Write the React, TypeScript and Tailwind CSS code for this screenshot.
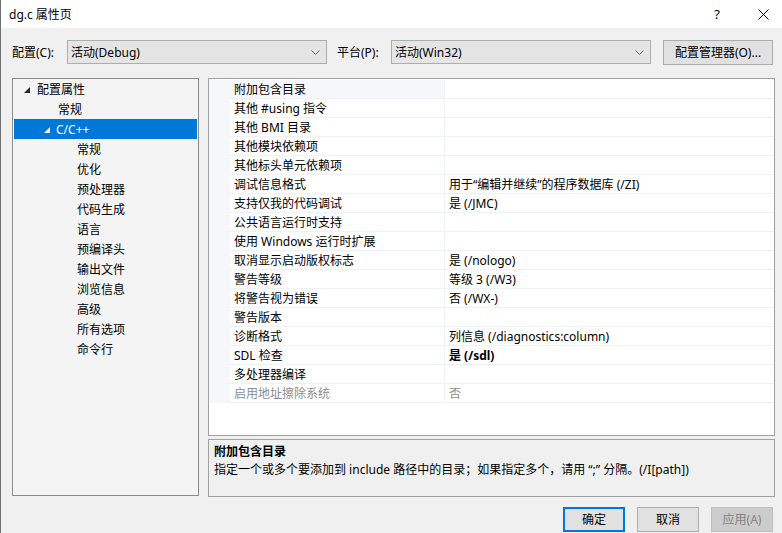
const font = { fontFamily: '"Noto Sans", "Noto Sans CJK SC", sans-serif' };

type Row = { name: string; value?: string; bold?: boolean; disabled?: boolean; selected?: boolean };

const rows: Row[] = [
  { name: "附加包含目录", selected: true },
  { name: "其他 #using 指令" },
  { name: "其他 BMI 目录" },
  { name: "其他模块依赖项" },
  { name: "其他标头单元依赖项" },
  { name: "调试信息格式", value: "用于“编辑并继续”的程序数据库 (/ZI)" },
  { name: "支持仅我的代码调试", value: "是 (/JMC)" },
  { name: "公共语言运行时支持" },
  { name: "使用 Windows 运行时扩展" },
  { name: "取消显示启动版权标志", value: "是 (/nologo)" },
  { name: "警告等级", value: "等级 3 (/W3)" },
  { name: "将警告视为错误", value: "否 (/WX-)" },
  { name: "警告版本" },
  { name: "诊断格式", value: "列信息 (/diagnostics:column)" },
  { name: "SDL 检查", value: "是 (/sdl)", bold: true },
  { name: "多处理器编译" },
  { name: "启用地址擦除系统", value: "否", disabled: true },
];

const children = ["常规", "优化", "预处理器", "代码生成", "语言", "预编译头", "输出文件", "浏览信息", "高级", "所有选项", "命令行"];

function Expanded({ color }: { color: string }) {
  return (
    <svg width="6" height="6" viewBox="0 0 6 6" className="shrink-0">
      <polygon points="6,0 6,6 0,6" fill={color} />
    </svg>
  );
}

function Chevron() {
  return (
    <svg width="9" height="5" viewBox="0 0 9 5">
      <polyline points="0.5,0.5 4.5,4.5 8.5,0.5" fill="none" stroke="#606060" strokeWidth="1" />
    </svg>
  );
}

function Combo({ text, width }: { text: string; width: string }) {
  return (
    <div className={`${width} flex h-[24px] items-center justify-between border border-[#adadad] bg-[#e5e5e5] pl-[3px] pr-[6px]`}>
      <span className="pt-[2px]">{text}</span>
      <Chevron />
    </div>
  );
}

export default function App() {
  return (
    <div
      style={font}
      className="flex h-[533px] w-[782px] flex-col overflow-hidden border-l border-[#707070] bg-[#f0f0f0] text-[12px] leading-[16px] text-black"
    >
      {/* Title bar */}
      <div className="flex h-[28px] shrink-0 items-center bg-white pl-[8px]">
        <span className="pt-[2px] text-[12px]">dg.c 属性页</span>
        <span className="ml-auto w-[12px] text-center text-[13px]">?</span>
        <svg width="11" height="11" viewBox="0 0 11 11" className="ml-[35px] mr-[13px]">
          <path d="M0.5 0.5 L10.5 10.5 M10.5 0.5 L0.5 10.5" stroke="#000" strokeWidth="1" />
        </svg>
      </div>

      {/* Configuration row */}
      <div className="mt-[12px] flex h-[24px] items-center pl-[11px]">
        <span className="w-[55px] pt-[2px]">配置(C):</span>
        <Combo text="活动(Debug)" width="w-[260px]" />
        <span className="ml-[10px] w-[54px] pt-[2px]">平台(P):</span>
        <Combo text="活动(Win32)" width="w-[260px]" />
        <button className="ml-[12px] h-[25px] w-[110px] border border-[#adadad] bg-[#e1e1e1] pt-px">配置管理器(O)...</button>
      </div>

      {/* Main area */}
      <div className="mt-[14px] flex pl-[11px]">
        {/* Tree */}
        <div className="h-[418px] w-[187px] border border-[#8c8c8c] bg-[#f4f4f4] px-px">
          <div className="flex h-[20px] items-center pt-[2px]">
            <span className="ml-[10px]"><Expanded color="#262626" /></span>
            <span className="ml-[7px]">配置属性</span>
          </div>
          <div className="flex h-[20px] items-center pl-[44px] pt-[2px]">常规</div>
          <div className="flex h-[20px] items-center bg-[#0078d7] pt-[2px] text-white">
            <span className="ml-[30px]"><Expanded color="#ffffff" /></span>
            <span className="ml-[6px]">C/C++</span>
          </div>
          {children.map((c) => (
            <div key={c} className="flex h-[20px] items-center pl-[63px] pt-[2px]">{c}</div>
          ))}
        </div>

        <div className="ml-[9px] flex w-[567px] flex-col">
          {/* Property grid */}
          <div className="h-[358px] border border-[#a0a0a0] bg-white pt-px">
            {rows.map((r) => (
              <div key={r.name} className="flex h-[19px]">
                <div className="w-[21px] bg-[#f5f7fb]" />
                <div
                  className={`flex w-[214px] items-center border-b border-[#eef1f6] pl-[4px] pt-[2px] ${r.selected ? "bg-[#f5f7fb]" : ""} ${r.disabled ? "text-[#8d8d8d]" : ""}`}
                >
                  {r.name}
                </div>
                <div
                  className={`flex flex-1 items-center border-b border-l border-[#eef1f6] pl-[4px] pt-[2px] ${r.bold ? "font-bold" : ""} ${r.disabled ? "text-[#8d8d8d]" : ""}`}
                >
                  {r.value}
                </div>
              </div>
            ))}
          </div>

          {/* Description */}
          <div className="mt-[3px] h-[58px] border border-[#a0a0a0] bg-[#f0f0f0] pl-[5px] pt-[4px]">
            <div className="h-[18px] font-bold">附加包含目录</div>
            <div>指定一个或多个要添加到 include 路径中的目录；如果指定多个，请用 “;” 分隔。(/I[path])</div>
          </div>
        </div>
      </div>

      {/* Buttons */}
      <div className="mt-[10px] flex justify-end gap-[12px] pr-[9px]">
        <button className="h-[25px] w-[62px] border-2 border-[#0078d7] bg-[#e1e1e1] pt-px">确定</button>
        <button className="h-[25px] w-[62px] border border-[#adadad] bg-[#e1e1e1] pt-px">取消</button>
        <button className="h-[25px] w-[62px] border border-[#bfbfbf] bg-[#cccccc] pt-px text-[#838383]">应用(A)</button>
      </div>
    </div>
  );
}
